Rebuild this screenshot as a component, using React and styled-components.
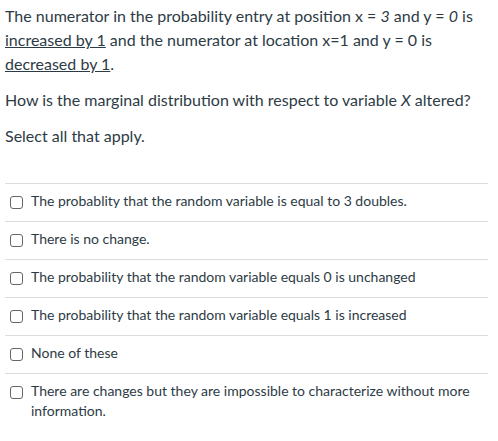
import React from 'react'
import styled, { createGlobalStyle } from 'styled-components'

const GlobalStyle = createGlobalStyle`
  body {
    margin: 0;
    background: #fff;
    font-family: Lato, "Open Sans", sans-serif;
    color: #2d3b45;
  }
`

const Page = styled.div`
  width: 483px;
  padding: 4px 0 0 5px;
`

const Paragraph = styled.p`
  margin: 0 0 12px;
  font-size: 16px;
  line-height: 24px;
`

const Instructions = styled(Paragraph)`
  margin-bottom: 35px;
`

const Under = styled.span`
  text-decoration: underline;
`

const OptionList = styled.div`
  display: flex;
  flex-direction: column;
`

const OptionRow = styled.label`
  display: flex;
  align-items: flex-start;
  gap: 8px;
  border-top: 1px solid #dcdcdc;
  padding: 7px 0 10px 5px;
  font-size: 14px;
  line-height: 20px;
`

const Box = styled.span`
  flex: none;
  width: 11px;
  height: 11px;
  margin-top: 5px;
  border: 1px solid #666;
  border-radius: 3px;
  background: #fff;
`

const OptionText = styled.span`
  flex: 1;
`

const options = [
  'The probablity that the random variable is equal to 3 doubles.',
  'There is no change.',
  'The probability that the random variable equals 0 is unchanged',
  'The probability that the random variable equals 1 is increased',
  'None of these',
  'There are changes but they are impossible to characterize without more information.'
]

export default function App() {
  return (
    <Page>
      <GlobalStyle />
      <Paragraph>
        The numerator in the probability entry at position x = <em>3</em> and y = <em>0</em> is{' '}
        <Under>increased by 1</Under> and the numerator at location x=1 and y = 0 is{' '}
        <Under>decreased by 1</Under>.
      </Paragraph>
      <Paragraph>
        How is the marginal distribution with respect to variable <em>X</em> altered?
      </Paragraph>
      <Instructions>Select all that apply.</Instructions>
      <OptionList>
        {options.map((text, i) => (
          <OptionRow key={i}>
            <Box />
            <OptionText>{text}</OptionText>
          </OptionRow>
        ))}
      </OptionList>
    </Page>
  )
}
